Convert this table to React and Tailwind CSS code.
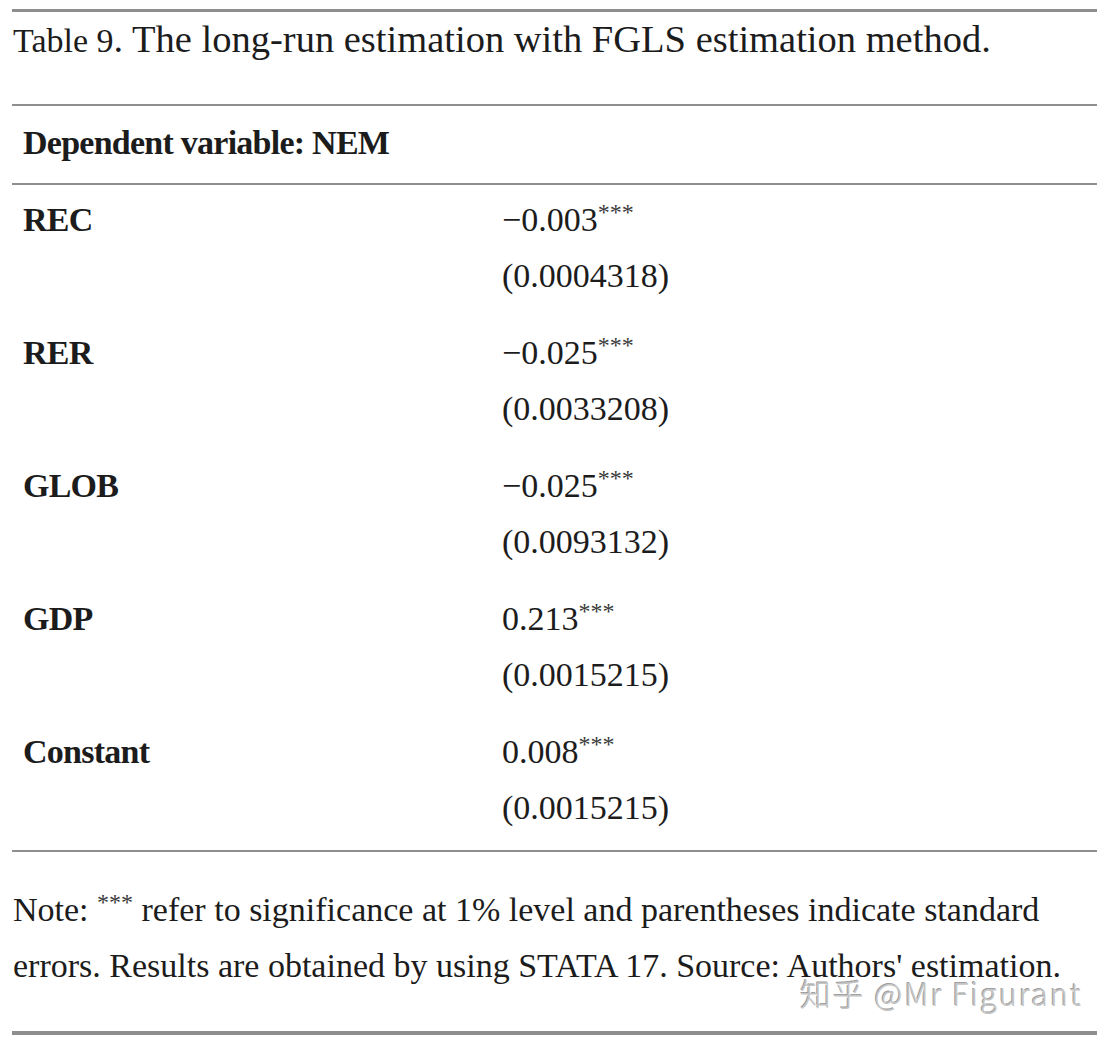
import React from "react";

const rows = [
  { label: "REC", value: "−0.003", se: "(0.0004318)" },
  { label: "RER", value: "−0.025", se: "(0.0033208)" },
  { label: "GLOB", value: "−0.025", se: "(0.0093132)" },
  { label: "GDP", value: "0.213", se: "(0.0015215)" },
  { label: "Constant", value: "0.008", se: "(0.0015215)" },
];

export default function App() {
  return (
    <div
      className="relative w-[1109px] h-[1043px] bg-white text-[#1c1c1c] overflow-hidden"
      style={{ fontFamily: '"Liberation Serif", "DejaVu Serif", serif' }}
    >
      <div className="ml-[12px] w-[1085px] pt-[9px]">
        <div className="h-[3px] bg-[#8e8e8e]" />
        <div className="h-[92px] pt-[5px] pl-[1px] leading-[44px] whitespace-nowrap">
          <span className="text-[34px]">Table 9</span>
          <span className="text-[38.5px]">. The long-run estimation with FGLS estimation method.</span>
        </div>
        <div className="h-[2px] bg-[#8e8e8e]" />
        <div className="h-[77px] flex items-center pb-[5px] pl-[11px] text-[34px] font-bold tracking-[-0.75px]">
          Dependent variable: NEM
        </div>
        <div className="h-[2px] bg-[#8e8e8e]" />
        {rows.map((r) => (
          <div key={r.label} className="h-[133px] pt-[7px] flex">
            <div className="w-[490px] pl-[11px] leading-[56px] text-[34px] font-bold tracking-[-0.75px]">
              {r.label}
            </div>
            <div className="flex flex-col leading-[56px] text-[34px]">
              <div className="h-[56px]">
                {r.value}
                <span className="text-[24px] leading-none relative top-[-11px] text-[#3a3a3a]">***</span>
              </div>
              <div className="h-[56px]">{r.se}</div>
            </div>
          </div>
        ))}
        <div className="h-[2px] bg-[#8e8e8e]" />
        <div className="pt-[30px] pl-[1px] text-[34px] leading-[56px] h-[179px]">
          <div className="whitespace-nowrap h-[56px]">
            Note: <span className="text-[24px] leading-none relative top-[-11px] text-[#3a3a3a]">***</span> refer to significance at 1% level and parentheses indicate standard
          </div>
          <div className="whitespace-nowrap h-[56px]">
            errors. Results are obtained by using STATA 17. Source: Authors' estimation.
          </div>
        </div>
        <div className="h-[4px] bg-[#8e8e8e]" />
      </div>
      <div
        className="absolute left-[800px] top-[970px] text-[31px] font-light text-[#c4c4c4] whitespace-nowrap tracking-[1.8px]"
        style={{
          fontFamily: '"Noto Sans CJK SC", "Noto Sans", sans-serif',
          textShadow: "1px 1px 0 #ffffff, -1px -1px 0 #a0a0a0",
        }}
      >
        知乎 @Mr Figurant
      </div>
    </div>
  );
}
